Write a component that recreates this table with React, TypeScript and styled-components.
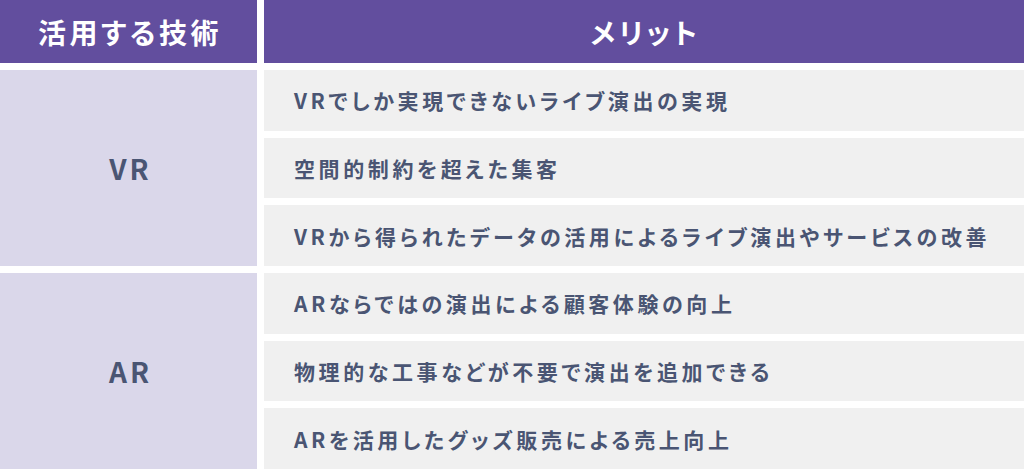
import React from "react";
import styled, { createGlobalStyle } from "styled-components";

const GlobalStyle = createGlobalStyle`
  html, body { margin: 0; padding: 0; background: #ffffff; }
  body { font-family: "Noto Sans CJK JP", "Noto Sans", sans-serif; }
`;

const Table = styled.div`
  display: grid;
  grid-template-columns: 257px 1fr;
  grid-template-rows: 63px 196px 196px;
  column-gap: 7px;
  row-gap: 7px;
  width: 1024px;
  height: 469px;
  font-feature-settings: "palt";
`;

const HeadCell = styled.div`
  background: #624e9e;
  color: #ffffff;
  font-weight: 700;
  font-size: 28px;
  letter-spacing: 3.5px;
  display: flex;
  align-items: center;
  justify-content: center;
  padding-left: 3px;
`;

const TechCell = styled.div`
  background: #dad7ea;
  color: #4a5573;
  font-weight: 700;
  font-size: 28px;
  letter-spacing: 3px;
  display: flex;
  align-items: center;
  justify-content: center;
  padding-left: 4px;
`;

const MeritList = styled.div`
  display: grid;
  grid-template-rows: repeat(3, 1fr);
  row-gap: 7px;
`;

const MeritRow = styled.div`
  background: #f0f0f0;
  color: #4a5573;
  font-weight: 700;
  font-size: 21px;
  letter-spacing: 3.6px;
  display: flex;
  align-items: center;
  padding-left: 30px;
  white-space: nowrap;
`;

const groups = [
  {
    tech: "VR",
    merits: [
      "VRでしか実現できないライブ演出の実現",
      "空間的制約を超えた集客",
      "VRから得られたデータの活用によるライブ演出やサービスの改善",
    ],
  },
  {
    tech: "AR",
    merits: [
      "ARならではの演出による顧客体験の向上",
      "物理的な工事などが不要で演出を追加できる",
      "ARを活用したグッズ販売による売上向上",
    ],
  },
];

export default function App() {
  return (
    <>
      <GlobalStyle />
      <Table>
        <HeadCell>活用する技術</HeadCell>
        <HeadCell>メリット</HeadCell>
        {groups.map((g) => (
          <React.Fragment key={g.tech}>
            <TechCell>{g.tech}</TechCell>
            <MeritList>
              {g.merits.map((m) => (
                <MeritRow key={m}>{m}</MeritRow>
              ))}
            </MeritList>
          </React.Fragment>
        ))}
      </Table>
    </>
  );
}
